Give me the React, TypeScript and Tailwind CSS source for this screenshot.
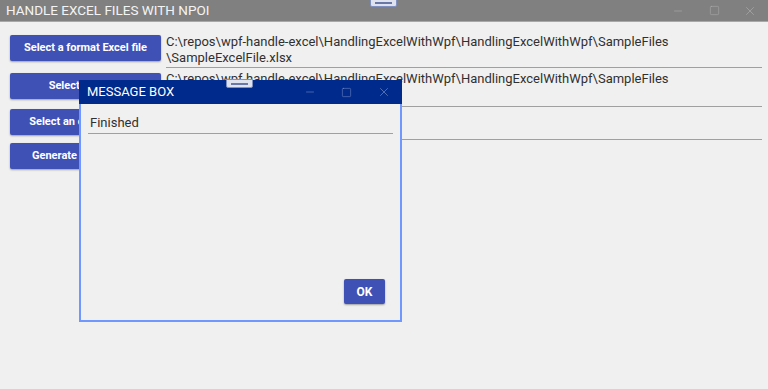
import { Minus, Square, X } from "lucide-react";

const buttons = ["Select a format Excel file", "Select data file", "Select an output folder", "Generate an Excel file"];

function TabGrip({ className }: { className: string }) {
    return (
        <div className={`absolute h-[9px] w-[27px] rounded-b-[2px] border border-[#8090c0] bg-[#dfe3f0] flex items-center justify-center ${className}`}>
            <div className="h-[2px] w-[17px] bg-[#6a78a8]" />
        </div>
    );
}

export default function App() {
    return (
        <div className="relative w-[768px] h-[389px] bg-[#f0f0f0] overflow-hidden font-['Roboto',sans-serif]">
            {/* Title bar */}
            <div className="h-[22px] bg-[#808080] flex items-center border-b border-[#a8a8a8]">
                <span className="pl-[6px] text-[13.5px] text-[#f4f4f4]">HANDLE EXCEL FILES WITH NPOI</span>
                <div className="ml-auto flex items-center text-[#b4b4b4]">
                    <div className="w-[36px] flex justify-center"><Minus size={12} strokeWidth={1} /></div>
                    <div className="w-[36px] flex justify-center"><Square size={11} strokeWidth={1} /></div>
                    <div className="w-[36px] flex justify-center"><X size={14} strokeWidth={1} /></div>
                </div>
            </div>
            <TabGrip className="left-[370px] top-[-2px]" />

            {/* Main content */}
            <div className="flex gap-[5px] pl-[10px] pr-[6px] pt-[13px]">
                <div className="flex flex-col w-[151px]">
                    {buttons.map((b, i) => (
                        <button
                            key={b}
                            className={`h-[26px] rounded-[2px] bg-[#3f51b5] text-white text-[11px] font-bold whitespace-nowrap shadow-[0_1px_2px_rgba(0,0,0,0.35)] ${i === 1 ? "mt-[12px]" : i === 2 ? "mt-[10px]" : i === 3 ? "mt-[8px]" : ""}`}
                        >
                            {b}
                        </button>
                    ))}
                </div>
                <div className="flex-1 flex flex-col text-[13px] text-[#303030] leading-[16px]">
                    <div className="h-[34px] border-b border-[#a0a0a0] -mt-[1px]">
                        <div>C:\repos\wpf-handle-excel\HandlingExcelWithWpf\HandlingExcelWithWpf\SampleFiles</div>
                        <div>\SampleExcelFile.xlsx</div>
                    </div>
                    <div className="h-[39px] border-b border-[#a0a0a0] pt-[3px] overflow-hidden">
                        <div>C:\repos\wpf-handle-excel\HandlingExcelWithWpf\HandlingExcelWithWpf\SampleFiles</div>
                    </div>
                    <div className="h-[33px] border-b border-[#a0a0a0]" />
                </div>
            </div>

            {/* Message box */}
            <div className="absolute left-[79px] top-[80px] w-[323px] h-[242px] border-2 border-t-0 border-[#7096ff] bg-[#f0f0f0] flex flex-col">
                <div className="h-[24px] -mx-[2px] bg-[#002a8c] flex items-center">
                    <span className="pl-[8px] text-[13px] text-white">MESSAGE BOX</span>
                    <div className="ml-auto flex items-center text-[#8a9ccf]">
                        <div className="w-[37px] flex justify-center"><Minus size={12} strokeWidth={1} /></div>
                        <div className="w-[37px] flex justify-center"><Square size={11} strokeWidth={1} /></div>
                        <div className="w-[37px] flex justify-center"><X size={14} strokeWidth={1} /></div>
                    </div>
                </div>
                <div className="mx-[7px] mt-[10px] border-b border-[#a0a0a0] h-[20px] pl-[2px] text-[13px] text-[#303030] leading-[18px]">
                    Finished
                </div>
                <div className="flex-1" />
                <div className="flex justify-end pr-[15px] pb-[16px]">
                    <button className="w-[41px] h-[25px] rounded-[2px] bg-[#3f51b5] text-white text-[12px] font-bold shadow-[0_1px_2px_rgba(0,0,0,0.35)]">
                        OK
                    </button>
                </div>
            </div>
            <TabGrip className="left-[226px] top-[79px]" />
        </div>
    );
}
